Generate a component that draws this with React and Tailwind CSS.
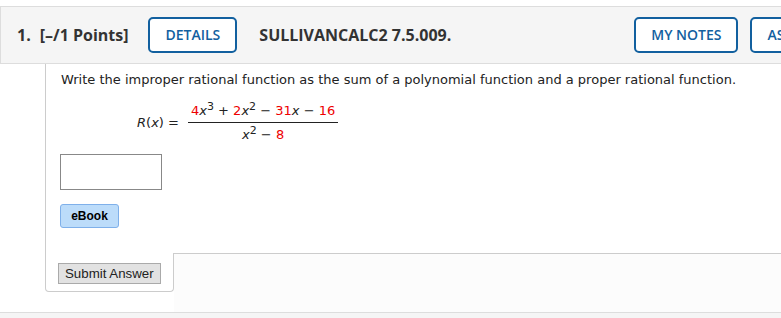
import React from 'react'

const RED = 'text-[#ee0000]'

function Btn({ children }) {
  return (
    <button className="h-[36px] px-[15px] rounded-[5px] border-2 border-[#12609f] bg-white text-[14px] font-semibold text-[#12609f] leading-none whitespace-nowrap">
      {children}
    </button>
  )
}

export default function App() {
  return (
    <div className="w-[781px] h-[318px] overflow-hidden bg-white font-['Open_Sans',sans-serif]">
      {/* question header */}
      <div className="mt-[6px] h-[58px] flex items-center bg-[#f5f5f5] border-y border-l border-[#dddddd] text-[#333] whitespace-nowrap overflow-hidden">
        <span className="ml-[16px] text-[16px] font-bold">1.</span>
        <span className="ml-[9px] text-[16px] font-bold">[–/1 Points]</span>
        <div className="ml-[20px] shrink-0"><Btn>DETAILS</Btn></div>
        <span className="ml-[22px] text-[16px] font-bold">SULLIVANCALC2 7.5.009.</span>
        <div className="ml-[183px] flex gap-[12px] shrink-0">
          <Btn>MY NOTES</Btn>
          <Btn>AS</Btn>
        </div>
      </div>

      {/* body */}
      <div className="ml-[45px] border-l border-[#cccccc] h-[189px] pl-[15px] pt-[7px] font-['DejaVu_Sans',Verdana,sans-serif] text-[#222]">
        <p className="text-[13px] leading-[18px] whitespace-nowrap">
          Write the improper rational function as the sum of a polynomial function and a proper rational function.
        </p>
        <div className="mt-[13px] ml-[76px] flex items-center text-[13px]">
          <span><i className="italic">R</i>(<i className="italic">x</i>) =</span>
          <div className="ml-[9px] flex flex-col items-center">
            <div className="px-[3px] pb-[2px] border-b border-[#222] leading-[18px]">
              <span className={RED}>4</span><i className="italic">x</i><sup className="text-[11px]">3</sup>
              {' + '}<span className={RED}>2</span><i className="italic">x</i><sup className="text-[11px]">2</sup>
              {' − '}<span className={RED}>31</span><i className="italic">x</i>
              {' − '}<span className={RED}>16</span>
            </div>
            <div className="leading-[18px] pt-[3px]">
              <i className="italic">x</i><sup className="text-[11px]">2</sup>{' − '}<span className={RED}>8</span>
            </div>
          </div>
        </div>
        <div className="mt-[10px] -ml-[1px] w-[102px] h-[36px] border border-[#888]" />
        <button className="mt-[14px] -ml-[1px] block w-[59px] h-[24px] rounded-[3px] border border-[#7fb0ea] bg-[#bcdcfa] font-['Liberation_Sans',Arial,sans-serif] font-bold text-[12px] text-black leading-none">
          eBook
        </button>
      </div>

      {/* submit row */}
      <div className="flex h-[59px]">
        <div className="ml-[45px] w-[129px] h-[39px] border-x border-b border-[#cccccc] rounded-b-[4px] pl-[12px] pt-[7px]">
          <button className="h-[21px] px-[6px] border border-[#aaa] bg-[#e2e2e2] font-['Liberation_Sans',Arial,sans-serif] text-[13.3px] text-[#222] leading-none">
            Submit Answer
          </button>
        </div>
        <div className="flex-1 border-t border-[#cccccc] bg-[#fcfcfc]" />
      </div>
      <div className="h-[10px] border-t border-[#dddddd] bg-[#f5f5f5]" />
    </div>
  )
}
